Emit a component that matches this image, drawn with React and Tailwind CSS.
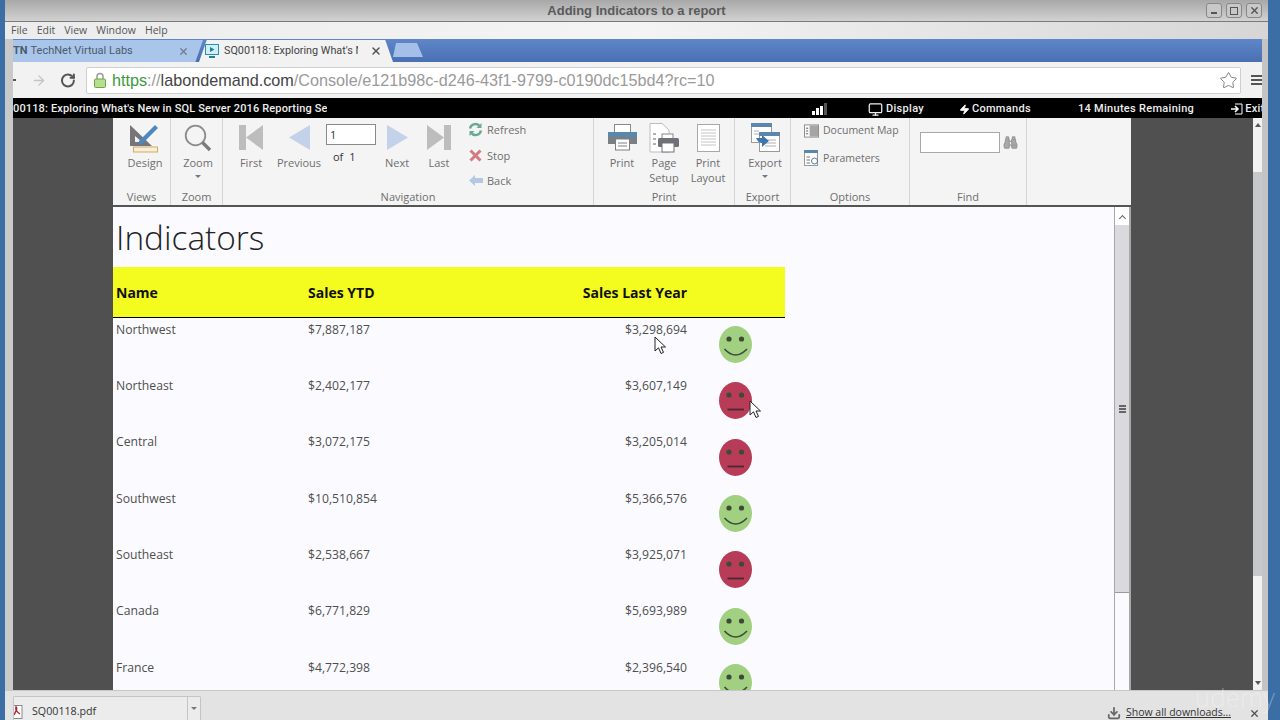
import { ArrowRight, Binoculars, Download, Monitor, RotateCw, Star, X, Zap } from "lucide-react";

const regions = [
  { name: "Northwest", ytd: "$7,887,187", last: "$3,298,694", happy: true },
  { name: "Northeast", ytd: "$2,402,177", last: "$3,607,149", happy: false },
  { name: "Central", ytd: "$3,072,175", last: "$3,205,014", happy: false },
  { name: "Southwest", ytd: "$10,510,854", last: "$5,366,576", happy: true },
  { name: "Southeast", ytd: "$2,538,667", last: "$3,925,071", happy: false },
  { name: "Canada", ytd: "$6,771,829", last: "$5,693,989", happy: true },
  { name: "France", ytd: "$4,772,398", last: "$2,396,540", happy: true },
];

function Face({ happy }) {
  return (
    <svg width="33" height="37" viewBox="0 0 33 37">
      <ellipse cx="16.5" cy="18.5" rx="16.5" ry="18.5" fill={happy ? "#a0d080" : "#b83b58"} />
      <circle cx="10" cy="13" r="2.6" fill="#3d4a3a" />
      <circle cx="22.5" cy="13" r="2.6" fill="#3d4a3a" />
      {happy ? (
        <path d="M5.5 23 Q16.5 35 28 23" fill="none" stroke="#3d4a3a" strokeWidth="1.6" />
      ) : (
        <path d="M8.5 27.5 H25" stroke="#4a2a30" strokeWidth="1.8" />
      )}
    </svg>
  );
}

function Cursor() {
  return (
    <svg width="13" height="19" viewBox="0 0 13 19">
      <path d="M1 1 V15 L4.5 11.8 L7 17.5 L9.5 16.4 L7 11 H11.5 Z" fill="#fff" stroke="#222" strokeWidth="1" />
    </svg>
  );
}

function Caret() {
  return <div className="mx-auto mt-[5px] h-0 w-0 border-x-[3px] border-t-[3px] border-x-transparent border-t-[#6a7a94]" />;
}

function Group({ label, className, children }) {
  return (
    <div className={`flex shrink-0 flex-col border-r border-[#d4d4d4] ${className}`}>
      <div className="flex h-[69px] min-h-0">{children}</div>
      <div className="pt-[2px] text-center leading-[15px]">{label}</div>
    </div>
  );
}

function Tool({ icon, lines, width, caret }) {
  return (
    <div className={`shrink-0 text-center leading-[15px] ${width}`}>
      <div className="flex h-[37px] items-center justify-center pt-[2px]">{icon}</div>
      {lines.map((line) => (
        <div key={line}>{line}</div>
      ))}
      {caret && <Caret />}
    </div>
  );
}

function SideItem({ icon, label, className }) {
  return (
    <div className={`flex items-center gap-[4px] ${className}`}>
      <span className="flex w-[15px] justify-center">{icon}</span>
      {label}
    </div>
  );
}

const DesignIcon = (
  <svg width="32" height="31" viewBox="0 0 32 31">
    <path d="M1 3 L1 24 L23 24 Z M6 14 L6 20 L13 20 Z" fill="#77757a" fillRule="evenodd" />
    <path d="M10 19 L26 3 L29 6 L13 22 L9 23 Z" fill="#4f86bd" />
    <rect x="4.5" y="25" width="24" height="5" fill="#f8efd8" stroke="#d3a963" />
  </svg>
);

const ZoomIcon = (
  <svg width="28" height="28" viewBox="0 0 28 28" fill="none">
    <circle cx="11.5" cy="11.5" r="9.8" stroke="#8b8b8b" strokeWidth="1.8" />
    <path d="M18.5 18.5 L26 26" stroke="#7b7b7b" strokeWidth="3.4" />
  </svg>
);

const FirstIcon = (
  <svg width="24" height="25" viewBox="0 0 24 25">
    <rect width="7" height="25" fill="#bdbdbd" />
    <path d="M24 0 V25 L7 12.5 Z" fill="#bdbdbd" />
  </svg>
);

const LastIcon = (
  <svg width="24" height="25" viewBox="0 0 24 25">
    <rect x="17" width="7" height="25" fill="#bdbdbd" />
    <path d="M0 0 V25 L17 12.5 Z" fill="#bdbdbd" />
  </svg>
);

const PrevIcon = (
  <svg width="21" height="25" viewBox="0 0 21 25">
    <path d="M21 0 V25 L0 12.5 Z" fill="#c3d2e8" />
  </svg>
);

const NextIcon = (
  <svg width="21" height="25" viewBox="0 0 21 25">
    <path d="M0 0 V25 L21 12.5 Z" fill="#c3d2e8" />
  </svg>
);

const RefreshIcon = (
  <svg width="15" height="15" viewBox="0 0 15 15" fill="none" stroke="#68ab90" strokeWidth="2.4">
    <path d="M2 6.5 A5.5 5.5 0 0 1 12 4.5" />
    <path d="M13 8.5 A5.5 5.5 0 0 1 3 10.5" />
    <path d="M13.5 1 V6 H8.5 Z M1.5 14 V9 H6.5 Z" fill="#68ab90" stroke="none" />
  </svg>
);

const StopIcon = (
  <svg width="13" height="13" viewBox="0 0 13 13" stroke="#d57a80" strokeWidth="3">
    <path d="M1.5 1.5 L11.5 11.5 M11.5 1.5 L1.5 11.5" />
  </svg>
);

const BackIcon = (
  <svg width="14" height="11" viewBox="0 0 14 11">
    <path d="M0 5.5 L6 0 V3 H14 V8 H6 V11 Z" fill="#b4c8e4" />
  </svg>
);

const PrintIcon = (
  <svg width="29" height="27" viewBox="0 0 29 27">
    <rect x="6.5" y="0.5" width="16" height="9" fill="#fff" stroke="#8a8a8a" />
    <path d="M3 8 H26 Q29 8 29 11 V20 H0 V11 Q0 8 3 8 Z" fill="#7b7f84" />
    <rect x="0" y="8" width="29" height="5" fill="#5a88ad" />
    <rect x="7.5" y="15" width="14" height="11" fill="#fff" stroke="#7b7f84" />
    <path d="M10 19 H19 M10 22 H19" stroke="#7b7f84" />
  </svg>
);

const PageSetupIcon = (
  <svg width="30" height="30" viewBox="0 0 30 30">
    <path d="M1 .5 H13 L20 7 V29 H1 Z" fill="#fff" stroke="#bcbcbc" />
    <path d="M4 11 H7 M4 16 H7 M4 21 H7" stroke="#b0b0b0" strokeWidth="2" />
    <rect x="13" y="11" width="11" height="6" fill="#fff" stroke="#888" />
    <rect x="9" y="15" width="21" height="9" rx="1.5" fill="#6e7276" />
    <rect x="13" y="20" width="12" height="9" fill="#fff" stroke="#6e7276" />
  </svg>
);

const PrintLayoutIcon = (
  <svg width="23" height="28" viewBox="0 0 23 28" fill="none">
    <rect x=".5" y=".5" width="22" height="27" fill="#fff" stroke="#a8a8a8" />
    <path d="M4 6 H19 M4 9 H19 M4 12 H19 M4 15 H19 M4 18 H19 M4 21 H19" stroke="#c4c4c4" />
  </svg>
);

const ExportIcon = (
  <svg width="29" height="29" viewBox="0 0 29 29">
    <rect x=".5" y=".5" width="20" height="19" fill="#fff" stroke="#9a9a9a" />
    <rect x="0" y="0" width="21" height="4" fill="#5b87ad" />
    <rect x="8.5" y="9.5" width="20" height="19" fill="#fff" stroke="#9a9a9a" />
    <rect x="8" y="9" width="21" height="4" fill="#5b87ad" />
    <path d="M3 8 H8 M3 11 H8 M14 17 H25 M14 20 H25 M14 23 H25" stroke="#b0b0b0" />
    <path d="M5 15 L11 15 L11 12 L18 18 L11 24 L11 20 Q7 20 5 15 Z" fill="#3f76ab" />
  </svg>
);

const DocMapIcon = (
  <svg width="16" height="14" viewBox="0 0 16 14">
    <rect x=".5" y=".5" width="15" height="13" fill="#fff" stroke="#8a8a8a" />
    <rect x="6" y="1" width="9" height="12" fill="#a5a5a5" />
    <path d="M2 4 H4.5 M2 7 H4.5 M2 10 H4.5" stroke="#555" />
  </svg>
);

const ParamsIcon = (
  <svg width="15" height="17" viewBox="0 0 15 17">
    <rect x=".5" y=".5" width="13" height="15" fill="#fff" stroke="#9a9a9a" />
    <rect width="14" height="3" fill="#5b87ad" />
    <path d="M2.5 7 H6 M2.5 10 H6 M2.5 13 H6" stroke="#777" />
    <circle cx="10.5" cy="11" r="3" fill="none" stroke="#5a7a9a" />
  </svg>
);

function Ribbon() {
  return (
    <div className="flex h-[89px] shrink-0 border-b-2 border-[#555] bg-[#f4f4f4] font-['Open_Sans',sans-serif] text-[11px] text-[#6e6e6e]">
      <Group label="Views" className="w-[58px]">
        <div className="w-[6px] shrink-0" />
        <Tool width="w-[52px]" icon={DesignIcon} lines={["Design"]} />
      </Group>
      <Group label="Zoom" className="w-[52px]">
        <div className="w-[3px] shrink-0" />
        <Tool width="w-[48px]" icon={ZoomIcon} lines={["Zoom"]} caret />
      </Group>
      <Group label="Navigation" className="w-[371px]">
        <div className="w-[4px] shrink-0" />
        <Tool width="w-[48px]" icon={FirstIcon} lines={["First"]} />
        <Tool width="w-[48px]" icon={PrevIcon} lines={["Previous"]} />
        <div className="ml-[3px] w-[50px] shrink-0 pt-[6px] text-[#333]">
          <div className="h-[21px] border border-[#8a8a8a] bg-white pl-[3px] leading-[19px]">1</div>
          <div className="mt-[4px] pl-[7px] leading-[15px]">
            of <span className="ml-[3px]">1</span>
          </div>
        </div>
        <Tool width="w-[42px]" icon={NextIcon} lines={["Next"]} />
        <Tool width="w-[42px]" icon={LastIcon} lines={["Last"]} />
        <div className="ml-[8px] flex flex-col pt-[4px] leading-[15px]">
          <SideItem icon={RefreshIcon} label="Refresh" className="h-[16px]" />
          <SideItem icon={StopIcon} label="Stop" className="mt-[11px] h-[16px]" />
          <SideItem icon={BackIcon} label="Back" className="mt-[10px] h-[16px]" />
        </div>
      </Group>
      <Group label="Print" className="w-[141px]">
        <div className="w-[7px] shrink-0" />
        <Tool width="w-[42px]" icon={PrintIcon} lines={["Print"]} />
        <Tool width="w-[42px]" icon={PageSetupIcon} lines={["Page", "Setup"]} />
        <Tool width="w-[46px]" icon={PrintLayoutIcon} lines={["Print", "Layout"]} />
      </Group>
      <Group label="Export" className="w-[56px]">
        <div className="w-[3px] shrink-0" />
        <Tool width="w-[54px]" icon={ExportIcon} lines={["Export"]} caret />
      </Group>
      <Group label="Options" className="w-[119px]">
        <div className="flex flex-col pl-[13px] pt-[6px] text-[10.5px]">
          <SideItem icon={DocMapIcon} label="Document Map" className="h-[14px]" />
          <SideItem icon={ParamsIcon} label="Parameters" className="mt-[12px] h-[17px]" />
        </div>
      </Group>
      <Group label="Find" className="w-[117px]">
        <div className="flex h-fit items-center pl-[10px] pt-[14px]">
          <div className="h-[21px] w-[80px] border border-[#a8a8a8] bg-white" />
          <Binoculars size={15} className="ml-[3px] fill-[#a8a8a8] text-[#9a9a9a]" />
        </div>
      </Group>
    </div>
  );
}

function Report() {
  return (
    <div className="flex min-h-0 flex-1 bg-[#fbfbff]">
      <div className="min-w-0 flex-1 overflow-hidden font-['Open_Sans',sans-serif] text-[12.2px] text-[#4e4e4e]">
        <h1 className="flex h-[60px] items-center pl-[3px] text-[33.4px] font-light text-[#222]">Indicators</h1>
        <div className="w-[672px]">
          <div className="grid h-[51px] grid-cols-[195px_130px_249px_98px] items-center border-b border-black bg-[#f4fb1e] text-[14px] font-bold text-[#111]">
            <div className="pl-[3px]">Name</div>
            <div>Sales YTD</div>
            <div className="text-right">Sales Last Year</div>
          </div>
          {regions.map((row) => (
            <div key={row.name} className="grid h-[56.33px] grid-cols-[195px_130px_249px_98px] pt-[2.8px]">
              <div className="pl-[3px]">{row.name}</div>
              <div>{row.ytd}</div>
              <div className="text-right">{row.last}</div>
              <div className="pl-[32px] pt-[5.2px]">
                <Face happy={row.happy} />
              </div>
            </div>
          ))}
        </div>
      </div>
      <div className="flex w-[17px] shrink-0 flex-col border-x border-[#a8a8a8] border-r-2">
        <div className="flex h-[18px] items-center justify-center bg-white">
          <div className="h-[5px] w-[5px] translate-y-[2px] rotate-45 border-l border-t border-[#666]" />
        </div>
        <div className="flex h-[368px] items-center justify-center border-b border-[#9a9a9a] bg-[#d9d9de]">
          <div className="flex flex-col gap-[1px]">
            <div className="h-[2px] w-[7px] bg-[#666]" />
            <div className="h-[2px] w-[7px] bg-[#666]" />
            <div className="h-[2px] w-[7px] bg-[#666]" />
          </div>
        </div>
      </div>
    </div>
  );
}

function Tabs() {
  return (
    <div className="flex h-[23px] shrink-0 items-end overflow-hidden bg-gradient-to-b from-[#5f86c8] to-[#4a70b4] font-['Roboto',sans-serif] text-[11px]">
      <div className="flex h-[22px] w-[190px] shrink-0 items-center bg-[#a9c6ea] text-[#4c5a6c] [clip-path:polygon(0_0,100%_0,96%_100%,0_100%)]">
        <span className="font-bold">TN</span>
        <span className="ml-[3px]">TechNet Virtual Labs</span>
        <X size={11} strokeWidth={3} className="ml-auto mr-[14px] text-[#6f7f92]" />
      </div>
      <div className="-ml-[4px] flex h-[22px] w-[194px] shrink-0 items-center bg-[#f2f2f2] pl-[6px] text-[10.8px] text-[#444] [clip-path:polygon(4%_0,96%_0,100%_100%,0_100%)]">
        <svg width="14" height="14" viewBox="0 0 14 14" className="shrink-0">
          <rect x=".5" y=".5" width="13" height="10" fill="#cfeef5" stroke="#2b8fa8" />
          <path d="M5 3 L9.5 5.5 L5 8 Z" fill="#1c7f98" />
          <path d="M4 13 H10" stroke="#1c7f98" strokeWidth="2" />
        </svg>
        <span className="ml-[5px] w-[134px] shrink-0 overflow-hidden whitespace-nowrap">SQ00118: Exploring What's New</span>
        <X size={12} strokeWidth={3} className="ml-[12px] shrink-0 text-[#555]" />
      </div>
      <div className="mb-[5px] h-[14px] w-[30px] shrink-0 rounded-t-[3px] bg-[#a4c0e8] [clip-path:polygon(10%_0,80%_0,100%_100%,0_100%)]" />
    </div>
  );
}

function AddressBar() {
  return (
    <div className="flex h-[36px] shrink-0 items-center bg-[#f2f2f2] font-['Liberation_Sans',sans-serif]">
      <div className="-ml-[6px] h-[2px] w-[10px] bg-[#555]" />
      <ArrowRight size={17} className="ml-[15px] text-[#c4c4c4]" />
      <RotateCw size={17} strokeWidth={3} className="ml-[13px] text-[#555]" />
      <div className="ml-[10px] flex h-[27px] w-[1155px] shrink-0 items-center rounded-[2px] border border-[#cfcfcf] bg-white pl-[7px] text-[16.2px]">
        <svg width="12" height="16" viewBox="0 0 12 16" className="shrink-0">
          <path d="M3 7 V4.5 A3 3 0 0 1 9 4.5 V7" fill="none" stroke="#999" strokeWidth="1.5" />
          <rect x=".5" y="7" width="11" height="8.5" rx="1" fill="#b6e08e" stroke="#6ca84a" />
        </svg>
        <span className="ml-[6px] whitespace-nowrap text-[#9a9a9a]">
          <span className="text-[#3d9a3d]">https</span>://
          <span className="text-[#444]">labondemand.com</span>/Console/e121b98c-d246-43f1-9799-c0190dc15bd4?rc=10
        </span>
        <Star size={19} strokeWidth={1} className="ml-auto mr-[2px] text-[#666]" />
      </div>
      <div className="ml-[10px] flex w-[11px] shrink-0 flex-col gap-[2px]">
        <div className="h-[2px] bg-[#555]" />
        <div className="h-[2px] bg-[#555]" />
        <div className="h-[2px] bg-[#555]" />
      </div>
    </div>
  );
}

function LabBar() {
  return (
    <div className="flex h-[20px] shrink-0 items-center overflow-hidden whitespace-nowrap bg-black pt-[2px] font-['Roboto',sans-serif] text-[11px] font-medium tracking-[0.3px] text-[#eee]">
      <div className="w-[314px] shrink-0 overflow-hidden tracking-[0.15px]">00118: Exploring What's New in SQL Server 2016 Reporting Se</div>
      <div className="ml-[485px] flex h-[12px] w-[16px] shrink-0 items-end gap-[1px]">
        <div className="h-[4px] w-[3px] bg-white" />
        <div className="h-[7px] w-[3px] bg-white" />
        <div className="h-[9px] w-[3px] bg-white" />
        <div className="h-[12px] w-[3px] bg-[#555]" />
      </div>
      <Monitor size={15} className="ml-[40px] shrink-0" />
      <span className="ml-[3px]">Display</span>
      <Zap size={11} className="ml-[35px] shrink-0 fill-white" />
      <span className="ml-[2px]">Commands</span>
      <span className="ml-[47px]">14 Minutes Remaining</span>
      <svg width="12" height="12" viewBox="0 0 12 12" fill="none" className="ml-[37px] shrink-0">
        <path d="M4 1 H11 V11 H4" stroke="#fff" />
        <path d="M0 6 H6 M4 3 L7 6 L4 9" stroke="#fff" strokeWidth="1.5" />
      </svg>
      <span className="ml-[2px]">Exit</span>
    </div>
  );
}

function DownloadBar() {
  return (
    <div className="flex h-[30px] shrink-0 items-end border-t border-[#c8c8c8] bg-[#e3e3e3] font-['Open_Sans',sans-serif] text-[10.7px] text-[#333]">
      <div className="ml-[8px] flex h-[24px] w-[188px] shrink-0 items-center rounded-t-[2px] border border-b-0 border-[#c4c4c4] bg-[#ececec] pt-[6px]">
        <svg width="9" height="14" viewBox="0 0 9 14" className="shrink-0">
          <rect x="-4" y=".5" width="12" height="13" fill="#fff" stroke="#888" />
          <path d="M0 10 Q4 3 2 2 Q1 6 6 9" fill="none" stroke="#b3202a" strokeWidth="1.4" />
        </svg>
        <span className="ml-[9px] whitespace-nowrap">SQ00118.pdf</span>
        <div className="-mt-[6px] ml-auto flex h-[24px] w-[13px] items-center justify-center border-l border-[#c4c4c4]">
          <div className="h-0 w-0 border-x-[3px] border-t-[3px] border-x-transparent border-t-[#777]" />
        </div>
      </div>
      <div className="ml-auto flex h-[29px] items-center pt-[15px] text-[10.5px]">
        <Download size={14} strokeWidth={3} className="text-[#666]" />
        <span className="ml-[5px] underline">Show all downloads...</span>
        <X size={11} strokeWidth={3} className="ml-[18px] mr-[8px] text-[#555]" />
      </div>
    </div>
  );
}

function PageScrollbar() {
  return (
    <div className="flex w-[9px] shrink-0 flex-col items-center bg-[#f1f1f1]">
      <div className="mt-[5px] h-0 w-0 border-x-[3px] border-b-[4px] border-x-transparent border-b-[#555]" />
      <div className="mt-[45px] h-[404px] w-full bg-[#c6c8ca]" />
      <div className="mt-auto mb-[5px] h-0 w-0 border-x-[3px] border-t-[4px] border-x-transparent border-t-[#555]" />
    </div>
  );
}

export default function App() {
  return (
    <div className="relative flex h-[720px] w-[1280px] overflow-hidden bg-[#3a6ea5]">
      <div className="w-[5px] shrink-0 bg-[#3a6ea5]" />
      <div className="flex w-[1263px] shrink-0 flex-col bg-[#c9c9c9]">
        <div className="flex h-[22px] shrink-0 items-center border-b border-[#7a7a7a] bg-gradient-to-b from-[#a8a8a8] to-[#d2d2d2] pr-[4px] font-['Liberation_Sans',sans-serif] text-[13px] font-bold text-[#5a5a5a]">
          <div className="w-[1201px] pl-[62px] text-center">Adding Indicators to a report</div>
          <div className="flex gap-[4px]">
            <div className="flex h-[15px] w-[16px] items-end justify-center rounded-[3px] border border-[#888] bg-[#c8c8c8] pb-[3px]">
              <div className="h-[2px] w-[6px] bg-[#555]" />
            </div>
            <div className="flex h-[15px] w-[16px] items-center justify-center rounded-[3px] border border-[#888] bg-[#c8c8c8]">
              <div className="h-[8px] w-[8px] border border-[#555]" />
            </div>
            <div className="flex h-[15px] w-[16px] items-center justify-center rounded-[3px] border border-[#888] bg-[#c8c8c8]">
              <X size={11} strokeWidth={3} className="text-[#555]" />
            </div>
          </div>
        </div>
        <div className="flex h-[17px] shrink-0 items-center gap-[9px] bg-gradient-to-r from-[#ececec] via-[#f4f4f4] to-[#d6d6d6] pl-[6px] pt-[1px] font-['Open_Sans',sans-serif] text-[10.5px] text-[#555]">
          <span>File</span>
          <span>Edit</span>
          <span>View</span>
          <span>Window</span>
          <span>Help</span>
        </div>
        <div className="flex min-h-0 flex-1">
          <div className="w-[8px] shrink-0 bg-[#c9c9c9]" />
          <div className="flex w-[1249px] shrink-0 flex-col overflow-hidden">
            <Tabs />
            <AddressBar />
            <LabBar />
            <div className="flex min-h-0 flex-1 bg-[#505050]">
              <div className="w-[100px] shrink-0" />
              <div className="flex w-[1018px] shrink-0 flex-col overflow-hidden">
                <Ribbon />
                <Report />
              </div>
              <div className="w-[122px] shrink-0" />
              <PageScrollbar />
            </div>
          </div>
          <div className="w-[6px] shrink-0 bg-[#c4c4c4]" />
        </div>
        <DownloadBar />
      </div>
      <div className="w-[12px] shrink-0 bg-[#3a6ea5]" />
      <div className="absolute left-[654px] top-[336px]">
        <Cursor />
      </div>
      <div className="absolute left-[749px] top-[400px]">
        <Cursor />
      </div>
      <div className="absolute left-[1195px] top-[678px] font-['Open_Sans',sans-serif] text-[26px] font-light text-white/30">udemy</div>
    </div>
  );
}
